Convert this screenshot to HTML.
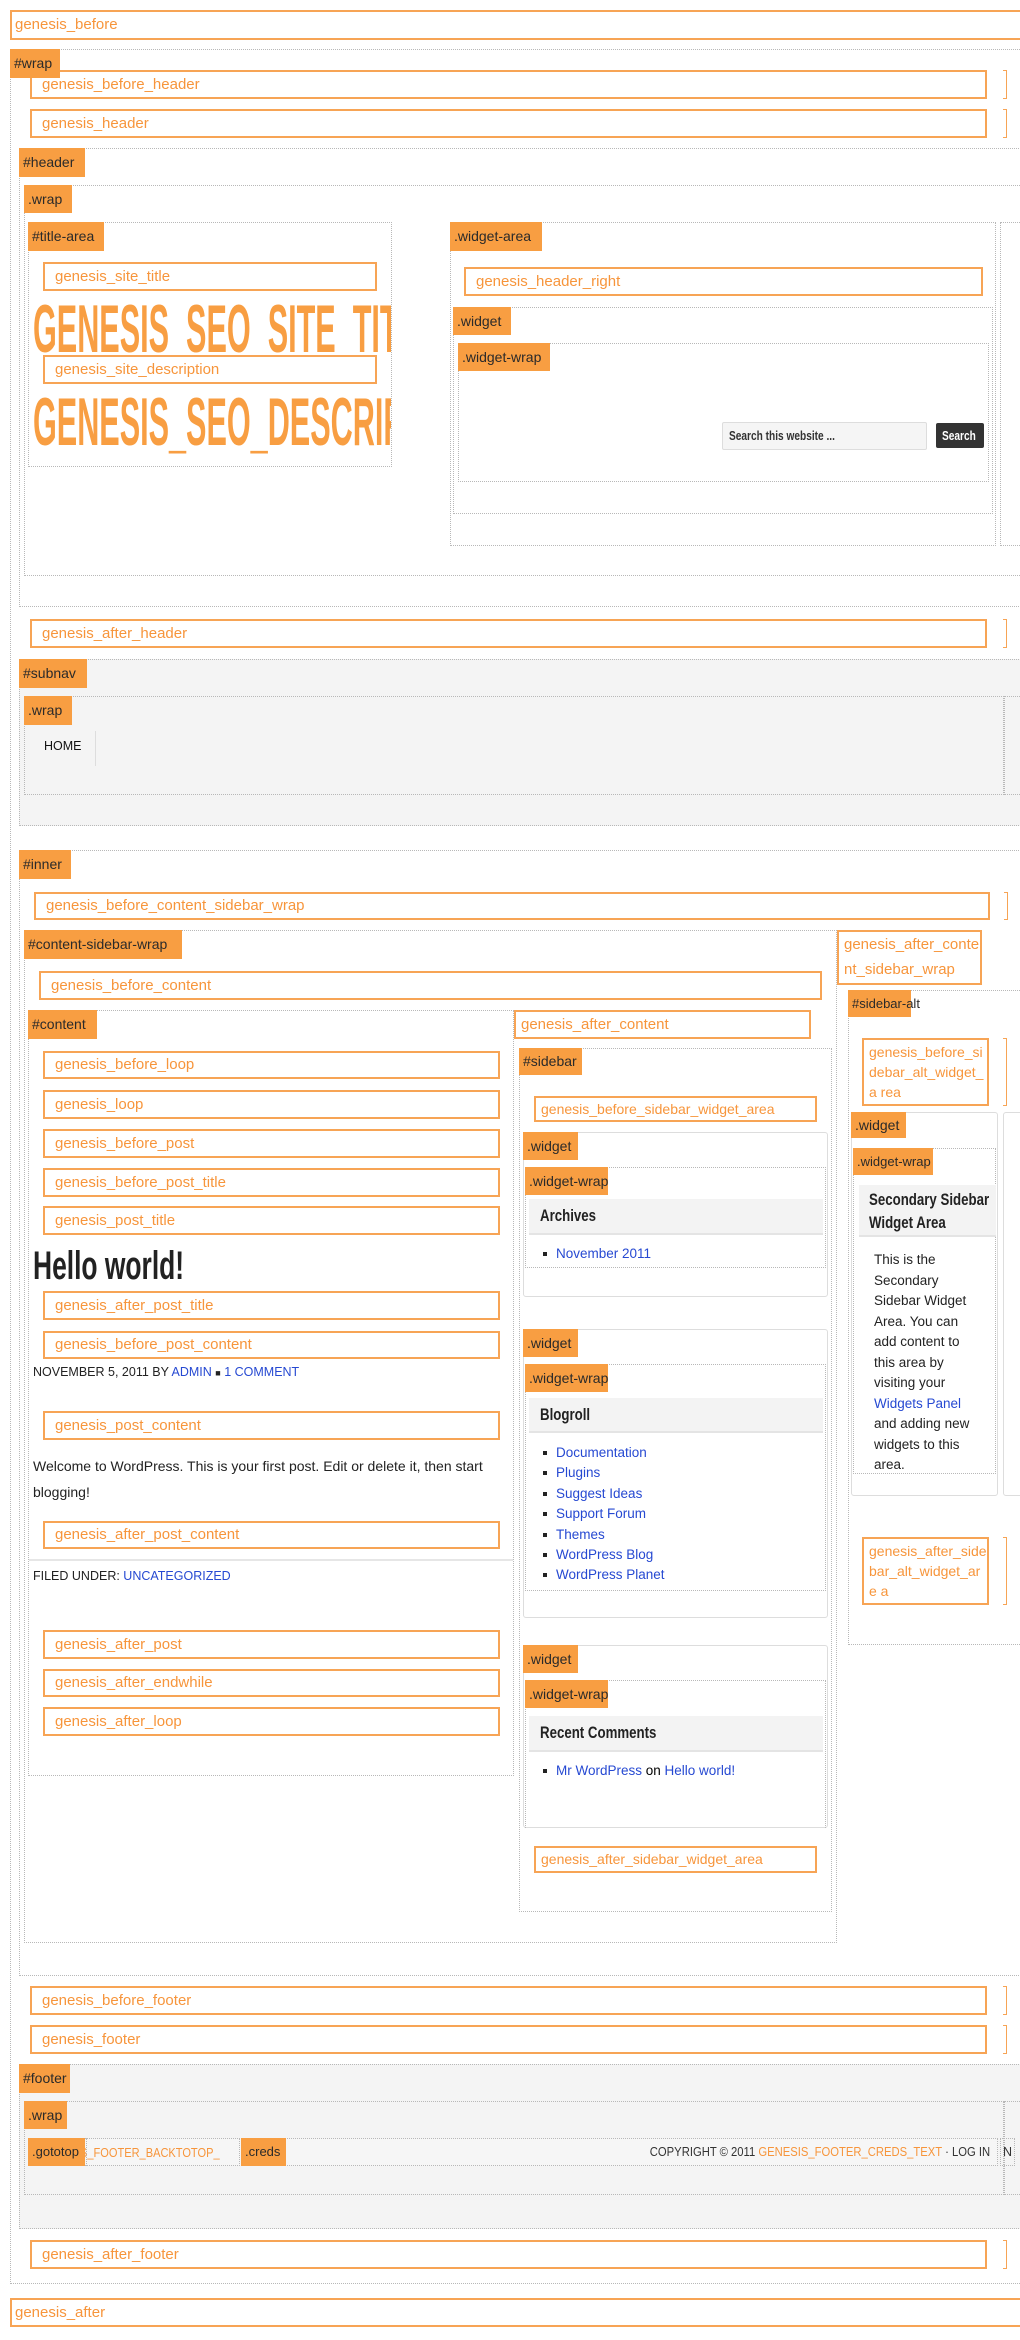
<!DOCTYPE html>
<html><head><meta charset="utf-8"><style>
*{margin:0;padding:0;box-sizing:border-box}
html,body{width:1020px;height:2340px;overflow:hidden;background:#fff;font-family:"Liberation Sans",Arial,sans-serif;position:relative}
.a{position:absolute}
.h{position:absolute;border:2px solid #f7a455;color:#f7953b;font-size:15px;padding-left:10px;white-space:nowrap;overflow:hidden}
.l{position:absolute;background:#f89e42;color:#2a2a2a;font-size:14px;padding-left:4px;line-height:28px;height:28px;white-space:nowrap;z-index:5}
.d{position:absolute;border:1px dotted #b8b8b8}
.br{position:absolute;border:1px solid #f7a455;border-left:none;width:4px}
.w{position:absolute;border:1px solid #ddd;border-radius:3px}
.hd{position:absolute;background:#f3f3f3;border-bottom:2px solid #e4e4e4;font-weight:bold;color:#222;font-size:17px;padding-left:11px;white-space:nowrap}
.cn{display:inline-block;transform:scaleX(0.78);transform-origin:0 50%}
.big{position:absolute;font-weight:bold;color:#f89e42;font-size:68px;line-height:68px;transform:scaleX(0.45);transform-origin:0 0;white-space:nowrap}
.lk{color:#2649d2}
ul.li{position:absolute;list-style:none;font-size:13.5px}
ul.li li{height:20.4px;line-height:20.4px;position:relative;padding-left:23px}
ul.li li:before{content:"";position:absolute;left:10px;top:8px;width:4px;height:4px;background:#222}
</style></head><body>

<div class="h" style="left:10px;top:10px;width:1030px;height:30px;line-height:26px;padding-left:3px">genesis_before</div>

<div class="d" style="left:10px;top:49px;width:1030px;height:2235px"></div>
<div class="l" style="left:10px;top:49px;width:50px;height:29px;line-height:29px">#wrap</div>

<div class="h" style="left:30px;top:70px;width:957px;height:29px;line-height:25px">genesis_before_header</div>
<div class="br" style="left:1003px;top:70px;height:29px"></div>
<div class="h" style="left:30px;top:109px;width:957px;height:29px;line-height:25px">genesis_header</div>
<div class="br" style="left:1003px;top:109px;height:29px"></div>

<div class="d" style="left:19px;top:148px;width:1020px;height:459px"></div>
<div class="l" style="left:19px;top:148px;width:66px;height:29px;line-height:29px">#header</div>
<div class="d" style="left:24px;top:185px;width:1010px;height:391px"></div>
<div class="l" style="left:24px;top:185px;width:48px">.wrap</div>

<div class="d" style="left:28px;top:222px;width:364px;height:245px;overflow:hidden">
  <div class="big" style="left:4px;top:72px">GENESIS_SEO_SITE_TITLE</div>
  <div class="big" style="left:4px;top:165px">GENESIS_SEO_DESCRIPTION</div>
</div>
<div class="l" style="left:28px;top:222px;width:76px;height:29px;line-height:29px">#title-area</div>
<div class="h" style="left:43px;top:262px;width:334px;height:29px;line-height:25px;background:#fff">genesis_site_title</div>
<div class="h" style="left:43px;top:355px;width:334px;height:29px;line-height:25px;background:#fff">genesis_site_description</div>

<div class="d" style="left:450px;top:222px;width:546px;height:324px"></div>
<div class="d" style="left:1000px;top:222px;width:30px;height:324px"></div>
<div class="l" style="left:450px;top:222px;width:92px;height:29px;line-height:29px">.widget-area</div>
<div class="h" style="left:464px;top:267px;width:519px;height:29px;line-height:25px">genesis_header_right</div>
<div class="d" style="left:453px;top:307px;width:540px;height:207px"></div>
<div class="l" style="left:453px;top:307px;width:58px">.widget</div>
<div class="d" style="left:458px;top:343px;width:531px;height:139px"></div>
<div class="l" style="left:458px;top:343px;width:92px">.widget-wrap</div>
<div class="a" style="left:722px;top:422px;width:205px;height:28px;background:#f5f5f5;border:1px solid #ddd;border-radius:2px;font-weight:bold;font-size:13px;color:#333;line-height:26px;padding-left:6px;white-space:nowrap"><span class="cn">Search this website ...</span></div>
<div class="a" style="left:936px;top:423px;width:48px;height:25px;background:#333;border-radius:2px;color:#fff;font-weight:bold;font-size:13px;line-height:25px;padding-left:6px;white-space:nowrap"><span class="cn">Search</span></div>

<div class="h" style="left:30px;top:619px;width:957px;height:29px;line-height:25px">genesis_after_header</div>
<div class="br" style="left:1003px;top:619px;height:29px"></div>

<div class="d" style="left:19px;top:659px;width:1020px;height:167px;background:#f4f4f4"></div>
<div class="l" style="left:19px;top:659px;width:68px;height:29px;line-height:29px">#subnav</div>
<div class="d" style="left:24px;top:696px;width:980px;height:99px;background:#f4f4f4"></div>
<div class="d" style="left:1004px;top:696px;width:30px;height:99px"></div>
<div class="l" style="left:24px;top:696px;width:48px;height:29px;line-height:29px">.wrap</div>
<div class="a" style="left:44px;top:739px;font-size:12.5px;color:#111">HOME</div>
<div class="a" style="left:95px;top:731px;width:1px;height:35px;background:#ddd"></div>

<div class="d" style="left:19px;top:850px;width:1020px;height:1126px"></div>
<div class="l" style="left:19px;top:850px;width:52px;height:29px;line-height:29px">#inner</div>
<div class="h" style="left:34px;top:892px;width:956px;height:28px;line-height:24px">genesis_before_content_sidebar_wrap</div>
<div class="br" style="left:1004px;top:892px;height:28px"></div>

<div class="d" style="left:24px;top:930px;width:813px;height:1013px"></div>
<div class="l" style="left:24px;top:930px;width:158px;height:29px;line-height:29px">#content-sidebar-wrap</div>
<div class="h" style="left:837px;top:930px;width:145px;height:55px;line-height:25px;white-space:normal;word-break:break-all;padding-left:5px">genesis_after_conte nt_sidebar_wrap</div>
<div class="h" style="left:39px;top:971px;width:783px;height:29px;line-height:25px">genesis_before_content</div>

<div class="d" style="left:28px;top:1010px;width:486px;height:766px"></div>
<div class="l" style="left:28px;top:1010px;width:69px;height:29px;line-height:29px">#content</div>
<div class="h" style="left:514px;top:1010px;width:297px;height:29px;line-height:25px;padding-left:5px">genesis_after_content</div>

<div class="h" style="left:43px;top:1051px;width:457px;height:28px;line-height:24px">genesis_before_loop</div>
<div class="h" style="left:43px;top:1090px;width:457px;height:29px;line-height:25px">genesis_loop</div>
<div class="h" style="left:43px;top:1129px;width:457px;height:29px;line-height:25px">genesis_before_post</div>
<div class="h" style="left:43px;top:1168px;width:457px;height:29px;line-height:25px">genesis_before_post_title</div>
<div class="h" style="left:43px;top:1206px;width:457px;height:29px;line-height:25px">genesis_post_title</div>
<div class="a" style="left:33px;top:1244px;font-size:40px;line-height:44px;font-weight:bold;color:#222;transform:scaleX(0.66);transform-origin:0 0;white-space:nowrap">Hello world!</div>
<div class="h" style="left:43px;top:1291px;width:457px;height:29px;line-height:25px">genesis_after_post_title</div>
<div class="h" style="left:43px;top:1331px;width:457px;height:28px;line-height:24px">genesis_before_post_content</div>
<div class="a" style="left:33px;top:1365px;font-size:12.5px;color:#222;white-space:nowrap">NOVEMBER 5, 2011 BY <span class="lk">ADMIN</span> <span style="font-size:9px">&#9632;</span> <span class="lk">1 COMMENT</span></div>
<div class="h" style="left:43px;top:1411px;width:457px;height:29px;line-height:25px">genesis_post_content</div>
<div class="a" style="left:33px;top:1453px;width:475px;font-size:14px;line-height:26px;color:#222">Welcome to WordPress. This is your first post. Edit or delete it, then start blogging!</div>
<div class="h" style="left:43px;top:1521px;width:457px;height:28px;line-height:24px">genesis_after_post_content</div>
<div class="a" style="left:29px;top:1559px;width:484px;height:2px;background:#e6e6e6"></div>
<div class="a" style="left:33px;top:1569px;font-size:12.5px;color:#222">FILED UNDER: <span class="lk">UNCATEGORIZED</span></div>
<div class="h" style="left:43px;top:1630px;width:457px;height:29px;line-height:25px">genesis_after_post</div>
<div class="h" style="left:43px;top:1669px;width:457px;height:28px;line-height:24px">genesis_after_endwhile</div>
<div class="h" style="left:43px;top:1707px;width:457px;height:29px;line-height:25px">genesis_after_loop</div>

<div class="d" style="left:519px;top:1048px;width:313px;height:864px"></div>
<div class="l" style="left:519px;top:1048px;width:63px;height:27px;line-height:27px">#sidebar</div>
<div class="h" style="left:534px;top:1096px;width:283px;height:26px;line-height:22px;font-size:14px;padding-left:5px">genesis_before_sidebar_widget_area</div>

<div class="w" style="left:523px;top:1132px;width:305px;height:165px"></div>
<div class="l" style="left:523px;top:1132px;width:55px">.widget</div>
<div class="d" style="left:525px;top:1167px;width:301px;height:101px"></div>
<div class="l" style="left:525px;top:1167px;width:83px">.widget-wrap</div>
<div class="hd" style="left:529px;top:1199px;width:294px;height:36px;line-height:34px"><span class="cn">Archives</span></div>
<ul class="li" style="left:533px;top:1244px"><li class="lk">November 2011</li></ul>

<div class="w" style="left:523px;top:1329px;width:305px;height:289px"></div>
<div class="l" style="left:523px;top:1329px;width:55px">.widget</div>
<div class="d" style="left:525px;top:1364px;width:301px;height:227px"></div>
<div class="l" style="left:525px;top:1364px;width:83px">.widget-wrap</div>
<div class="hd" style="left:529px;top:1398px;width:294px;height:35px;line-height:33px"><span class="cn">Blogroll</span></div>
<ul class="li" style="left:533px;top:1443px">
<li class="lk">Documentation</li><li class="lk">Plugins</li><li class="lk">Suggest Ideas</li><li class="lk">Support Forum</li><li class="lk">Themes</li><li class="lk">WordPress Blog</li><li class="lk">WordPress Planet</li></ul>

<div class="w" style="left:523px;top:1645px;width:305px;height:183px"></div>
<div class="l" style="left:523px;top:1645px;width:55px">.widget</div>
<div class="d" style="left:525px;top:1680px;width:301px;height:148px;border-bottom:none"></div>
<div class="l" style="left:525px;top:1680px;width:83px">.widget-wrap</div>
<div class="hd" style="left:529px;top:1716px;width:294px;height:36px;line-height:34px"><span class="cn">Recent Comments</span></div>
<ul class="li" style="left:533px;top:1761px"><li><span class="lk">Mr WordPress</span> on <span class="lk">Hello world!</span></li></ul>
<div class="h" style="left:534px;top:1846px;width:283px;height:27px;line-height:23px;font-size:14px;padding-left:5px">genesis_after_sidebar_widget_area</div>

<div class="d" style="left:848px;top:990px;width:180px;height:655px"></div>
<div class="l" style="left:848px;top:990px;width:63px;height:27px;line-height:27px;font-size:13px">#sidebar-alt</div>
<div class="h" style="left:862px;top:1038px;width:127px;height:68px;line-height:20px;padding:2px 0 0 5px;white-space:normal;word-break:break-all;font-size:14px">genesis_before_si debar_alt_widget_a rea</div>
<div class="br" style="left:1003px;top:1038px;height:68px"></div>
<div class="w" style="left:851px;top:1112px;width:147px;height:384px"></div>
<div class="w" style="left:1003px;top:1112px;width:30px;height:384px"></div>
<div class="l" style="left:851px;top:1112px;width:55px;height:26px;line-height:26px">.widget</div>
<div class="d" style="left:853px;top:1148px;width:143px;height:326px"></div>
<div class="l" style="left:853px;top:1148px;width:80px;height:27px;line-height:27px;font-size:13px">.widget-wrap</div>
<div class="hd" style="left:859px;top:1185px;width:137px;height:52px;padding-left:10px;overflow:hidden"><div style="transform:scaleX(0.78);transform-origin:0 0;width:170px;white-space:normal;line-height:23px;padding-top:3px">Secondary Sidebar Widget Area</div></div>
<div class="a" style="left:874px;top:1250px;width:120px;font-size:13.5px;line-height:20.5px;color:#222">This is the<br>Secondary<br>Sidebar Widget<br>Area. You can<br>add content to<br>this area by<br>visiting your<br><span class="lk">Widgets Panel</span><br>and adding new<br>widgets to this<br>area.</div>
<div class="h" style="left:862px;top:1537px;width:127px;height:68px;line-height:20px;padding:2px 0 0 5px;white-space:normal;word-break:break-all;font-size:14px">genesis_after_side bar_alt_widget_are a</div>
<div class="br" style="left:1003px;top:1537px;height:68px"></div>

<div class="h" style="left:30px;top:1986px;width:957px;height:29px;line-height:25px">genesis_before_footer</div>
<div class="br" style="left:1003px;top:1986px;height:29px"></div>
<div class="h" style="left:30px;top:2025px;width:957px;height:29px;line-height:25px">genesis_footer</div>
<div class="br" style="left:1003px;top:2025px;height:29px"></div>

<div class="d" style="left:19px;top:2064px;width:1020px;height:165px;background:#f4f4f4"></div>
<div class="l" style="left:19px;top:2064px;width:51px;height:29px;line-height:29px">#footer</div>
<div class="d" style="left:24px;top:2101px;width:980px;height:94px"></div>
<div class="d" style="left:1004px;top:2101px;width:30px;height:94px"></div>
<div class="l" style="left:24px;top:2101px;width:43px">.wrap</div>
<div class="d" style="left:28px;top:2138px;width:970px;height:28px;background:#f6f6f6"></div>
<div class="d" style="left:1000px;top:2138px;width:15px;height:28px"></div>
<div class="l" style="left:28px;top:2138px;width:57px;font-size:13px">.gototop</div>
<div class="a" style="left:80px;top:2145px;font-size:13px;color:#f7953b;white-space:nowrap"><span class="cn" style="transform:scaleX(0.85)">S_FOOTER_BACKTOTOP_</span></div>
<div class="d" style="left:86px;top:2138px;width:154px;height:28px"></div>
<div class="l" style="left:241px;top:2138px;width:45px;font-size:13px">.creds</div>
<div class="a" style="left:560px;top:2145px;width:430px;text-align:right;font-size:12.5px;color:#333;white-space:nowrap"><span style="display:inline-block;transform:scaleX(0.9);transform-origin:100% 50%">COPYRIGHT © 2011 <span style="color:#f7953b">GENESIS_FOOTER_CREDS_TEXT</span> · LOG IN</span></div>
<div class="a" style="left:1003px;top:2145px;font-size:12.5px;color:#333">N</div>

<div class="h" style="left:30px;top:2240px;width:957px;height:29px;line-height:25px">genesis_after_footer</div>
<div class="br" style="left:1003px;top:2240px;height:29px"></div>

<div class="h" style="left:10px;top:2298px;width:1030px;height:29px;line-height:25px;padding-left:3px">genesis_after</div>
</body></html>
